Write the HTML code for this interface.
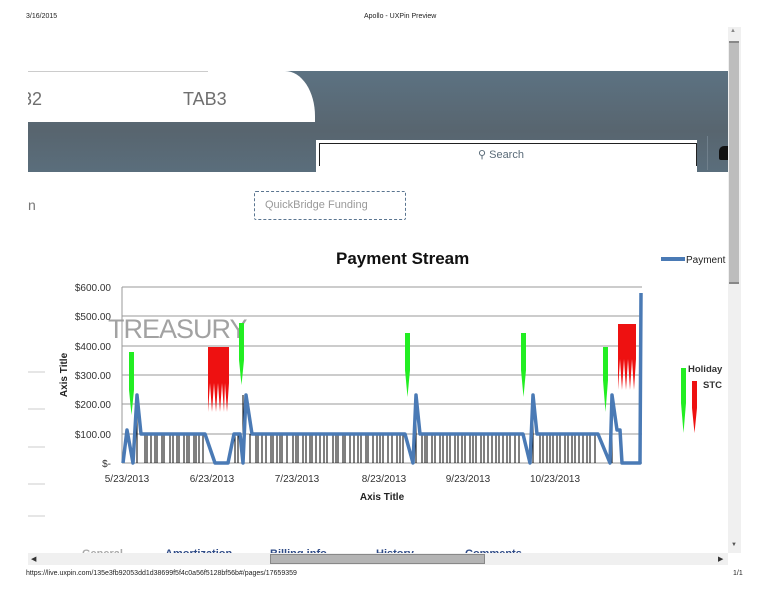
<!DOCTYPE html>
<html><head><meta charset="utf-8"><style>
body{margin:0;width:768px;height:594px;background:#fff;position:relative;overflow:hidden;font-family:"Liberation Sans",sans-serif}
.a{position:absolute}
</style></head><body>
<div class="a" style="left:26px;top:13px;font-size:7px;color:#222">3/16/2015</div>
<div class="a" style="left:364px;top:13px;font-size:7px;color:#222">Apollo - UXPin Preview</div>
<div class="a" style="left:28px;top:71px;width:700px;height:101px;background:linear-gradient(#5c7282,#58656f 60%,#5a6e7c)"></div>
<div class="a" style="left:28px;top:71px;width:287px;height:51px;background:#fff;border-top-right-radius:30px 45px"></div>
<div class="a" style="left:28px;top:71px;width:180px;height:1px;background:#ccc"></div>
<div class="a" style="left:22px;top:89px;font-size:18px;color:#6f6f6f;width:30px;overflow:hidden"><span style="margin-left:0">32</span></div>
<div class="a" style="left:0;top:80px;width:28px;height:40px;background:#fff"></div>
<div class="a" style="left:183px;top:89px;font-size:18px;color:#6f6f6f">TAB3</div>
<div class="a" style="left:316px;top:140px;width:381px;height:32px;background:#fff"></div>
<div class="a" style="left:319px;top:143px;width:376px;height:22px;border-top:1.5px solid #222;border-left:1px solid #222;border-right:1px solid #222"></div>
<div class="a" style="left:478px;top:148px;font-size:11px;color:#5a6b78">&#9906; Search</div>
<div class="a" style="left:707px;top:136px;width:1px;height:34px;background:#70808c"></div>
<div class="a" style="left:719px;top:146px;width:9px;height:14px;background:#111;border-radius:5px 0 0 2px"></div>
<div class="a" style="left:28px;top:197px;font-size:14px;color:#777">n</div>
<div class="a" style="left:254px;top:191px;width:150px;height:27px;border:1px dashed #5a7590;border-radius:2px;font-size:11px;color:#999;line-height:27px;text-indent:10px">QuickBridge Funding</div>
<div class="a" style="left:336px;top:249px;font-size:17px;font-weight:bold;color:#111">Payment Stream</div>
<svg class="a" style="left:0;top:0" width="768" height="594">
<g stroke="#999" stroke-width="1">
<line x1="122" y1="287" x2="642" y2="287"/><line x1="122" y1="316" x2="642" y2="316"/><line x1="122" y1="346" x2="642" y2="346"/><line x1="122" y1="375" x2="642" y2="375"/><line x1="122" y1="404" x2="642" y2="404"/><line x1="122" y1="434" x2="642" y2="434"/><line x1="122" y1="463" x2="642" y2="463"/><line x1="122" y1="287" x2="122" y2="463"/>
</g>
<g stroke="#ccc"><line x1="28" y1="372" x2="45" y2="372"/><line x1="28" y1="409" x2="45" y2="409"/><line x1="28" y1="447" x2="45" y2="447"/><line x1="28" y1="484" x2="45" y2="484"/><line x1="28" y1="516" x2="45" y2="516"/></g>
<g font-size="10" fill="#333" text-anchor="end"><text x="111" y="291">$600.00</text><text x="111" y="320">$500.00</text><text x="111" y="350">$400.00</text><text x="111" y="379">$300.00</text><text x="111" y="408">$200.00</text><text x="111" y="438">$100.00</text><text x="111" y="467">$-</text></g>
<g font-size="10" fill="#333" text-anchor="middle"><text x="127" y="482">5/23/2013</text><text x="212" y="482">6/23/2013</text><text x="297" y="482">7/23/2013</text><text x="384" y="482">8/23/2013</text><text x="468" y="482">9/23/2013</text><text x="555" y="482">10/23/2013</text></g>
<text x="382" y="500" font-size="10" font-weight="bold" text-anchor="middle" fill="#222">Axis Title</text>
<text transform="translate(67,375) rotate(-90)" font-size="10" font-weight="bold" text-anchor="middle" fill="#222">Axis Title</text>
<text x="108" y="338" font-size="27" fill="#999" opacity=".9" letter-spacing="-1">TREASURY</text>
<path stroke="#000" stroke-width="1" shape-rendering="crispEdges" d="M145 434V463M147 434V463M151 434V463M155 434V463M157 434V463M162 434V463M164 434V463M170 434V463M173 434V463M177 434V463M179 434V463M184 434V463M187 434V463M189 434V463M194 434V463M196 434V463M199 434V463M203 434V463M235 434V463M238 434V463M250 434V463M256 434V463M258 434V463M262 434V463M266 434V463M271 434V463M273 434V463M277 434V463M280 434V463M282 434V463M287 434V463M293 434V463M296 434V463M298 434V463M303 434V463M306 434V463M310 434V463M312 434V463M316 434V463M320 434V463M324 434V463M327 434V463M333 434V463M336 434V463M338 434V463M343 434V463M345 434V463M350 434V463M354 434V463M358 434V463M361 434V463M366 434V463M368 434V463M373 434V463M377 434V463M380 434V463M383 434V463M388 434V463M392 434V463M397 434V463M400 434V463M403 434V463M422 434V463M425 434V463M427 434V463M432 434V463M435 434V463M440 434V463M443 434V463M447 434V463M450 434V463M455 434V463M458 434V463M462 434V463M465 434V463M470 434V463M473 434V463M476 434V463M481 434V463M484 434V463M488 434V463M492 434V463M496 434V463M499 434V463M503 434V463M507 434V463M510 434V463M515 434V463M519 434V463M540 434V463M543 434V463M547 434V463M550 434V463M553 434V463M557 434V463M560 434V463M565 434V463M568 434V463M572 434V463M575 434V463M579 434V463M583 434V463M587 434V463M590 434V463M595 434V463M137 395V463M243 395V463M416 395V463M533 395V463M612 395V463"/>
<polyline fill="none" stroke="#4a7ab5" stroke-width="3.5" stroke-linejoin="round" points="123,463 127,430 133,463 137,395 141,434 205,434 215,463 228,463 234,434 240,434 243,463 246,395 252,434 405,434 413,463 416,395 420,434 523,434 530,463 533,395 537,434 598,434 610,463 612,395 617,430 620,430 622,463 640,463 641,293"/>
<g fill="#22ee22"><path d="M129 352h5v38l-2.5 25l-2.5-25z"/><path d="M239 323h5v37l-2.5 25l-2.5-25z"/><path d="M405 333h5v37l-2.5 27l-2.5-27z"/><path d="M521 333h5v37l-2.5 27l-2.5-27z"/><path d="M603 347h5v33l-2.5 32l-2.5-32z"/><path d="M681 368h5v35l-2.5 30l-2.5-30z"/></g>
<g fill="#ee1111"><path d="M208 347h21v36l-2 29l-2-29-1 29-2-29-2 29-2-29-2 29-2-29-2 29-2-29-2 29z"/><path d="M618 324h18v35l-2 31l-2-31-2 31-2-31-2 31-2-31-2 31-2-31-2 31z"/><path d="M692 381h5v27l-2.5 25l-2.5-25z"/></g>
<line x1="661" y1="259" x2="685" y2="259" stroke="#4a7ab5" stroke-width="4"/>
<text x="686" y="263" font-size="10" fill="#222">Payment</text>
<text x="688" y="372" font-size="9.5" font-weight="bold" fill="#333">Holiday</text>
<text x="703" y="388" font-size="9.5" font-weight="bold" fill="#333">STC</text>
</svg>
<div class="a" style="left:28px;top:547px;width:700px;height:6px;overflow:hidden;font-size:11px;font-weight:bold;color:#2e4a86">
<span class="a" style="left:54px;top:1px;color:#aaa">General</span><span class="a" style="left:137px;top:1px">Amortization</span><span class="a" style="left:242px;top:1px">Billing info</span><span class="a" style="left:348px;top:1px">History</span><span class="a" style="left:437px;top:1px">Comments</span></div>
<div class="a" style="left:728px;top:27px;width:13px;height:526px;background:#f0f0f0"></div>
<div class="a" style="left:729px;top:41px;width:10px;height:243px;background:#bdbdbd;border-top:2px solid #888;border-bottom:2px solid #888;box-sizing:border-box"></div>
<div class="a" style="left:730px;top:28px;font-size:6px;color:#888">&#9650;</div>
<div class="a" style="left:731px;top:542px;font-size:6px;color:#555">&#9660;</div>
<div class="a" style="left:28px;top:553px;width:700px;height:12px;background:#f0f0f0"></div>
<div class="a" style="left:270px;top:554px;width:215px;height:10px;background:#b4b4b4;border:1px solid #888;box-sizing:border-box"></div>
<div class="a" style="left:31px;top:555px;font-size:7px;color:#333">&#9664;</div>
<div class="a" style="left:718px;top:555px;font-size:7px;color:#333">&#9654;</div>
<div class="a" style="left:26px;top:570px;font-size:7px;color:#222">https://live.uxpin.com/135e3fb92053dd1d38699f5f4c0a56f5128bf56b#/pages/17659359</div>
<div class="a" style="left:733px;top:570px;font-size:7px;color:#222">1/1</div>
</body></html>
